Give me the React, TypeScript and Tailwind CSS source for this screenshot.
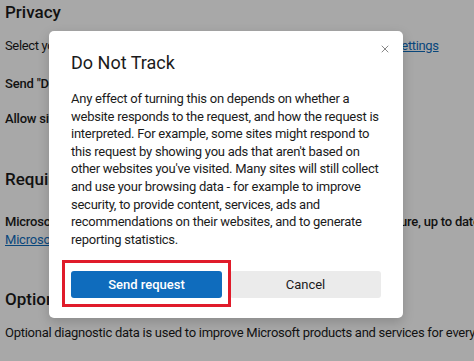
import { X } from "lucide-react";

const font = { fontFamily: 'Roboto, "Noto Sans", sans-serif' };

const bodyLines = [
  "Any effect of turning this on depends on whether a",
  "website responds to the request, and how the request is",
  "interpreted. For example, some sites might respond to",
  "this request by showing you ads that aren't based on",
  "other websites you've visited. Many sites will still collect",
  "and use your browsing data - for example to improve",
  "security, to provide content, services, ads and",
  "recommendations on their websites, and to generate",
  "reporting statistics.",
];

function SettingsPage() {
  return (
    <div className="flex flex-col whitespace-nowrap px-[5px] pt-[2px] text-[#1b1b1b] tracking-[-0.2px]">
      <h1 className="text-[17px] leading-[20px] font-medium tracking-normal">Privacy</h1>
      <p className="mt-[14.5px] text-[13px] leading-[17.6px] tracking-[-0.36px]">
        Select your privacy settings for Microsoft Edge.{" "}
        <span className="text-[#0f6cbd] underline">Learn more about these settings</span>
      </p>
      <p className="mt-[21.4px] text-[13px] leading-[17.6px] font-medium">
        Send "Do Not Track" requests
      </p>
      <p className="mt-[17.4px] text-[13px] leading-[17.6px] font-medium">
        Allow sites to check if you have payment methods saved
      </p>
      <h2 className="mt-[40.8px] text-[17px] leading-[20px] font-medium tracking-normal">
        Required diagnostic data
      </h2>
      <div className="mt-[24.2px] text-[13px] leading-[17.6px]">
        <p className="font-medium tracking-[-0.22px]">
          Microsoft collects required diagnostic data to keep Microsoft Edge secure, up to date
        </p>
        <p className="text-[#0f6cbd] underline">Microsoft privacy statement</p>
      </div>
      <h2 className="mt-[40.5px] text-[17px] leading-[20px] font-medium tracking-normal">
        Optional diagnostic data
      </h2>
      <p className="mt-[15.5px] text-[13px] leading-[17.6px] tracking-[-0.27px]">
        Optional diagnostic data is used to improve Microsoft products and services for every-
      </p>
    </div>
  );
}

function DoNotTrackDialog() {
  return (
    <div className="absolute left-[49px] top-[31px] w-[354px] rounded-[5px] bg-white px-[22px] pt-[20px] pb-[20px] text-[#1b1b1b] shadow-[0_4px_12px_rgba(0,0,0,0.18)]">
      <button className="absolute right-[10px] top-[10px] flex h-[16px] w-[16px] items-center justify-center text-[#555]">
        <X size={12} strokeWidth={1.4} />
      </button>
      <h2 className="text-[18px] leading-[24px]">Do Not Track</h2>
      <div className="mt-[15px] text-[13px] leading-[17.6px] tracking-[-0.25px] whitespace-nowrap">
        {bodyLines.map((line) => (
          <span key={line} className="block">
            {line}
          </span>
        ))}
      </div>
      <div className="mt-[23px] flex gap-[8px]">
        <div className="relative">
          <button className="flex h-[27px] w-[151px] items-center justify-center rounded-[3px] bg-[#0f6cbd] text-[13px] font-medium text-white">
            Send request
          </button>
          <div className="pointer-events-none absolute -left-[9px] -right-[9px] -top-[11px] -bottom-[9px] border-[3px] border-[#e01b2a]" />
        </div>
        <button className="flex h-[27px] w-[151px] items-center justify-center rounded-[3px] bg-[#ebebeb] text-[13px] text-[#1b1b1b]">
          Cancel
        </button>
      </div>
    </div>
  );
}

export default function App() {
  return (
    <div className="relative h-[361px] w-[474px] overflow-hidden bg-white" style={font}>
      <SettingsPage />
      <div className="absolute inset-0 bg-black/[0.34]" />
      <DoNotTrackDialog />
    </div>
  );
}
